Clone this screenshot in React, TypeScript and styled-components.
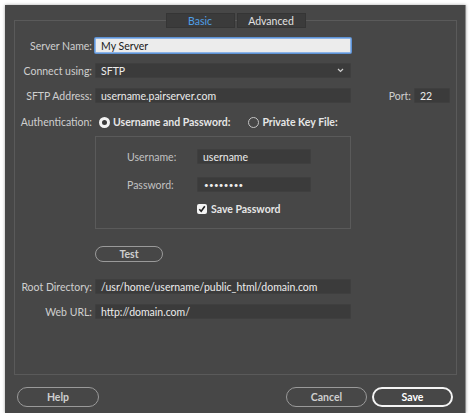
import React from "react";
import styled, { createGlobalStyle } from "styled-components";

const Global = createGlobalStyle`
  html, body {
    margin: 0;
    padding: 0;
    background: #ffffff;
  }
  body {
    font-family: "Lato", "Liberation Sans", sans-serif;
    font-size: 11px;
  }
`;

const Dialog = styled.div`
  margin: 5px 0 0 5px;
  width: 461px;
  height: 408px;
  box-sizing: border-box;
  background: #474747;
  border-right: 1px solid #8a8a8a;
  box-shadow: 0 0 3px rgba(0, 0, 0, 0.35);
  padding: 15px 8px 0 9px;
  display: flex;
  flex-direction: column;
`;

const Panel = styled.div`
  height: 355px;
  box-sizing: border-box;
  border: 1px solid #5a5a5a;
  display: flex;
  flex-direction: column;
`;

const TabBar = styled.div`
  display: flex;
  justify-content: center;
  gap: 2px;
  margin-top: -8px;
  height: 15px;
`;

const Tab = styled.div<{ $active?: boolean }>`
  width: 69px;
  height: 15px;
  box-sizing: border-box;
  background: #3b3b3b;
  border: 1px solid #353535;
  color: ${({ $active }) => ($active ? "#4f9fe6" : "#e2e2e2")};
  font-size: 10.5px;
  display: flex;
  align-items: center;
  justify-content: center;
`;

const Row = styled.div<{ $top: number; $h?: number }>`
  display: grid;
  grid-template-columns: 77px 256px 1fr;
  column-gap: 3px;
  align-items: center;
  margin-top: ${({ $top }) => $top}px;
  height: ${({ $h }) => $h ?? 15}px;
  padding-right: 6px;
`;

const Label = styled.div`
  text-align: right;
  color: #cfcfcf;
  font-size: 10.5px;
  white-space: nowrap;
`;

const Field = styled.div<{ $focus?: boolean; $w?: number }>`
  height: 15px;
  width: ${({ $w }) => ($w ? `${$w}px` : "auto")};
  box-sizing: border-box;
  border-radius: 1px;
  padding-left: 5px;
  display: flex;
  align-items: center;
  font-size: 10.5px;
  white-space: nowrap;
  background: ${({ $focus }) => ($focus ? "#ececec" : "#3b3b3b")};
  color: ${({ $focus }) => ($focus ? "#1a1a1a" : "#ececec")};
  border: 1px solid ${({ $focus }) => ($focus ? "#8db4e6" : "#3f3f3f")};
  box-shadow: ${({ $focus }) => ($focus ? "0 0 0 1px #5e93d6" : "none")};
`;

const Select = styled(Field)`
  justify-content: space-between;
  padding-right: 6px;
`;

const Dots = styled.span`
  font-size: 8px;
  letter-spacing: 0.3px;
  padding-left: 1px;
`;

const PortGroup = styled.div`
  justify-self: end;
  display: flex;
  align-items: center;
  gap: 3px;
`;

const RadioGroup = styled.div`
  display: flex;
  align-items: center;
  padding-left: 4px;
  gap: 18px;
`;

const RadioOption = styled.div`
  display: flex;
  align-items: center;
  gap: 3px;
  color: #e6e6e6;
  font-size: 10.5px;
  font-weight: 700;
  white-space: nowrap;
`;

const RadioDot = styled.span<{ $on?: boolean }>`
  width: 11px;
  height: 11px;
  box-sizing: border-box;
  border-radius: 50%;
  border: ${({ $on }) => ($on ? "3px solid #f2f2f2" : "1px solid #c4c4c4")};
  background: ${({ $on }) => ($on ? "#3a3a3a" : "transparent")};
`;

const CredBox = styled.div`
  height: 93px;
  box-sizing: border-box;
  border: 1px solid #5a5a5a;
  padding: 12px 0 0 31px;
  display: flex;
  flex-direction: column;
  gap: 13px;
`;

const CredRow = styled.div`
  display: grid;
  grid-template-columns: 70px 114px;
  align-items: center;
`;

const CredLabel = styled.div`
  color: #c2c2c2;
  font-size: 10.5px;
`;

const CheckRow = styled.div`
  display: flex;
  align-items: center;
  gap: 4px;
  margin-left: 70px;
  margin-top: -2px;
  color: #e6e6e6;
  font-size: 10.5px;
  font-weight: 700;
`;

const CheckBox = styled.span`
  width: 10px;
  height: 10px;
  border-radius: 2px;
  background: #f4f4f4;
  display: flex;
  align-items: center;
  justify-content: center;
`;

const PillButton = styled.div<{ $w: number; $primary?: boolean; $h?: number }>`
  width: ${({ $w }) => $w}px;
  height: ${({ $h }) => $h ?? 20}px;
  box-sizing: border-box;
  border-radius: 10px;
  border: ${({ $primary }) => ($primary ? "2px solid #f4f4f4" : "1px solid #9a9a9a")};
  color: ${({ $primary }) => ($primary ? "#ffffff" : "#cfcfcf")};
  font-weight: 700;
  font-size: 10.5px;
  display: flex;
  align-items: center;
  justify-content: center;
`;

const Footer = styled.div`
  display: flex;
  align-items: center;
  margin-top: 12px;
  padding: 0 4px 0 3px;
  gap: 5px;
`;

const Spacer = styled.div`
  flex: 1;
`;

const Chevron = () => (
  <svg width="7" height="5" viewBox="0 0 7 5">
    <polyline points="1,1 3.5,3.5 6,1" fill="none" stroke="#cfcfcf" strokeWidth="1.2" />
  </svg>
);

const Tick = () => (
  <svg width="8" height="8" viewBox="0 0 8 8">
    <polyline points="1.3,4.2 3.2,6.3 6.8,1.2" fill="none" stroke="#222" strokeWidth="1.6" />
  </svg>
);

export default function App() {
  return (
    <>
      <Global />
      <Dialog>
        <Panel>
          <TabBar>
            <Tab $active>Basic</Tab>
            <Tab>Advanced</Tab>
          </TabBar>

          <Row $top={10}>
            <Label>Server Name:</Label>
            <Field $focus>My Server</Field>
          </Row>

          <Row $top={10}>
            <Label>Connect using:</Label>
            <Select>
              <span>SFTP</span>
              <Chevron />
            </Select>
          </Row>

          <Row $top={10}>
            <Label>SFTP Address:</Label>
            <Field>username.pairserver.com</Field>
            <PortGroup>
              <Label>Port:</Label>
              <Field $w={36}>22</Field>
            </PortGroup>
          </Row>

          <Row $top={12} $h={14}>
            <Label>Authentication:</Label>
            <RadioGroup>
              <RadioOption>
                <RadioDot $on />
                Username and Password:
              </RadioOption>
              <RadioOption>
                <RadioDot />
                Private Key File:
              </RadioOption>
            </RadioGroup>
          </Row>

          <Row $top={7} $h={93}>
            <span />
            <CredBox>
              <CredRow>
                <CredLabel>Username:</CredLabel>
                <Field>username</Field>
              </CredRow>
              <CredRow>
                <CredLabel>Password:</CredLabel>
                <Field>
                  <Dots>••••••••</Dots>
                </Field>
              </CredRow>
              <CheckRow>
                <CheckBox>
                  <Tick />
                </CheckBox>
                Save Password
              </CheckRow>
            </CredBox>
          </Row>

          <Row $top={17} $h={16}>
            <span />
            <PillButton $w={68} $h={16}>
              Test
            </PillButton>
          </Row>

          <Row $top={17}>
            <Label>Root Directory:</Label>
            <Field>/usr/home/username/public_html/domain.com</Field>
          </Row>

          <Row $top={10}>
            <Label>Web URL:</Label>
            <Field>http://domain.com/</Field>
          </Row>
        </Panel>

        <Footer>
          <PillButton $w={82}>Help</PillButton>
          <Spacer />
          <PillButton $w={81}>Cancel</PillButton>
          <PillButton $w={81} $primary>
            Save
          </PillButton>
        </Footer>
      </Dialog>
    </>
  );
}
